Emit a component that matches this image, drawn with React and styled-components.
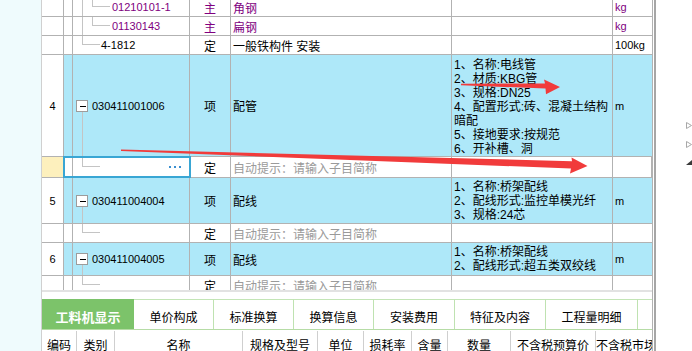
import styled, { createGlobalStyle } from "styled-components";

const GlobalStyle = createGlobalStyle`
  html, body { margin: 0; padding: 0; background: #fff; }
  body {
    font-family: "Liberation Sans", "Noto Sans CJK SC", sans-serif;
    font-size: 12px;
    color: #000;
  }
  * { box-sizing: border-box; }
`;

const COLS = "22px 9px 117px 41px 221px 161px 39px";
const LINE = "#b2b2b2";
const CYAN = "#aee8f9";
const PURPLE = "#800080";

//#region data
const rows = [
  { h: 19, kind: "leaf2", code: "01210101-1", type: "主", name: "角钢", unit: "kg", purple: true },
  { h: 19, kind: "leaf2", code: "01130143", type: "主", name: "扁钢", unit: "kg", purple: true },
  { h: 19, kind: "leaf1", code: "4-1812", type: "定", name: "一般铁构件 安装", unit: "100kg" },
  {
    h: 102, kind: "item", no: "4", code: "030411001006", type: "项", name: "配管", unit: "m", top: true,
    desc: ["1、名称:电线管", "2、材质:KBG管", "3、规格:DN25", "4、配置形式:砖、混凝土结构", "暗配", "5、接地要求:按规范", "6、开补槽、洞"],
  },
  { h: 21, kind: "edit", type: "定", hint: true },
  {
    h: 46, kind: "item", no: "5", code: "030411004004", type: "项", name: "配线", unit: "m",
    desc: ["1、名称:桥架配线", "2、配线形式:监控单模光纤", "3、规格:24芯"],
  },
  { h: 19, kind: "leaf1", type: "定", hint: true },
  {
    h: 33, kind: "item", no: "6", code: "030411004005", type: "项", name: "配线", unit: "m",
    desc: ["1、名称:桥架配线", "2、配线形式:超五类双绞线"],
  },
  { h: 19, kind: "leaf1", type: "定", hint: true },
];

const tabs = [
  { label: "工料机显示", w: 92, active: true },
  { label: "单价构成", w: 80 },
  { label: "标准换算", w: 80 },
  { label: "换算信息", w: 80 },
  { label: "安装费用", w: 81 },
  { label: "特征及内容", w: 91 },
  { label: "工程量明细", w: 92 },
];

const heads = [
  ["编码", 35], ["类别", 38], ["名称", 128], ["规格及型号", 75], ["单位", 46],
  ["损耗率", 48], ["含量", 36], ["数量", 63], ["不含税预算价", 85], ["不含税市场价", 56],
];
//#endregion

function Tree({ kind, h }) {
  const ch = h - 1;
  const mid = Math.round(ch / 2) - 1;
  return (
    <TreeSvg width="117" height={ch}>
      {kind === "leaf2" && (
        <>
          <line x1="9.5" y1="0" x2="9.5" y2={ch} />
          <path d={`M19.5 0V${mid + 0.5}H37`} />
        </>
      )}
      {(kind === "leaf1" || kind === "edit") && <path d={`M9.5 0V${mid + 0.5}H27`} />}
      {kind === "item" && <line x1="9.5" y1={ch / 2 + 6} x2="9.5" y2={ch} />}
    </TreeSvg>
  );
}

function GridRow({ r }) {
  const item = r.kind === "item";
  const color = r.purple ? PURPLE : "#000";
  return (
    <Row $h={r.h} $item={item}>
      <NumCell $edit={r.kind === "edit"}>{r.no}</NumCell>
      <Cell />
      <CodeCell $pad={item ? 3 : r.kind === "leaf2" ? 39 : 28} $color={color}>
        <Tree kind={r.kind} h={r.h} />
        {item && <MinusBox />}
        {r.code && <span>{r.code}</span>}
        {r.kind === "edit" && (
          <Dots width="12" height="2">
            <rect x="0" y="0" width="2" height="2" />
            <rect x="5" y="0" width="2" height="2" />
            <rect x="10" y="0" width="2" height="2" />
          </Dots>
        )}
      </CodeCell>
      <TypeCell $color={color}>{r.type}</TypeCell>
      <NameCell $color={r.hint ? "#9a9a9a" : color}>
        {r.hint ? "自动提示：请输入子目简称" : r.name}
      </NameCell>
      <DescCell $top={r.top}>
        {r.desc && r.desc.map((d) => <div key={d}>{d}</div>)}
      </DescCell>
      <UnitCell $color={color}>{r.unit}</UnitCell>
      {r.kind === "edit" && <Selection />}
    </Row>
  );
}

export default function App() {
  return (
    <Page>
      <GlobalStyle />
      <LeftStrip />
      <Main>
        <GridArea>
          <Body>
            {rows.map((r, i) => (
              <GridRow key={i} r={r} />
            ))}
          </Body>
        </GridArea>
        <Splitter />
        <TabBar>
          {tabs.map((t) => (
            <Tab key={t.label} $w={t.w} $active={t.active}>
              {t.label}
            </Tab>
          ))}
          <TabFill />
        </TabBar>
        <HeadRow>
          {heads.map(([label, w]) => (
            <HeadCell key={label} $w={w}>
              {label}
            </HeadCell>
          ))}
        </HeadRow>
      </Main>
      <Gap />
      <Divider />
      <RightPanel>
        <Tri width="6" height="7">
          <path d="M0.5 0.5L5.5 3.5L0.5 6.5Z" fill="#fff" stroke="#a8a8a8" />
        </Tri>
        <Tri width="6" height="7">
          <path d="M0.5 0.5L5.5 3.5L0.5 6.5Z" fill="#fff" stroke="#a8a8a8" />
        </Tri>
        <Tri width="6" height="5">
          <path d="M6 0L6 5L0 5Z" fill="#3a3a3a" />
        </Tri>
      </RightPanel>
      <Arrows width="692" height="351">
        <path d="M461 83.8L545 83.4L544 79.6L560 87L546 94.2L545.5 88.6L461 85.2Z" />
        <path d="M121 149.6L572 161.2L571.5 157.5L587.5 166L570 173.5L571 168.5L121 151Z" />
      </Arrows>
    </Page>
  );
}

//#region STYLED COMPONENTS
const Page = styled.div`
  position: relative;
  display: flex;
  width: 692px;
  height: 351px;
  overflow: hidden;
  background: #fff;
`;

const LeftStrip = styled.div`
  width: 42px;
  flex-shrink: 0;
  background: #effbfd;
  border-right: 1px solid #d0d0d0;
`;

const Main = styled.div`
  width: 611px;
  flex-shrink: 0;
  display: flex;
  flex-direction: column;
  border-right: 1px solid ${LINE};
`;

const GridArea = styled.div`
  height: 290px;
  flex-shrink: 0;
  overflow: hidden;
`;

const Body = styled.div`
  margin-top: -2px;
`;

const Row = styled.div`
  position: relative;
  display: grid;
  grid-template-columns: ${COLS};
  height: ${(p) => p.$h}px;
  border-bottom: 1px solid ${LINE};
  background: ${(p) => (p.$item ? CYAN : "#fff")};
`;

const Cell = styled.div`
  position: relative;
  display: flex;
  align-items: center;
  overflow: hidden;
  white-space: nowrap;
  border-right: 1px solid ${LINE};
  color: ${(p) => p.$color || "#000"};
  &:last-child {
    border-right: none;
  }
`;

const NumCell = styled(Cell)`
  justify-content: center;
  font-size: 11px;
  background: ${(p) => (p.$edit ? "#fdf0bd" : "#fff")};
`;

const CodeCell = styled(Cell)`
  padding-left: ${(p) => p.$pad}px;
  font-size: 11px;
`;

const TreeSvg = styled.svg`
  position: absolute;
  left: 0;
  top: 0;
  stroke: #c4c4c4;
  stroke-width: 1;
  fill: none;
  shape-rendering: crispEdges;
`;

const MinusBox = styled.span`
  position: relative;
  width: 12px;
  height: 12px;
  margin-right: 4px;
  flex-shrink: 0;
  border: 1px solid #9c9c9c;
  background: #fff;
  &::after {
    content: "";
    position: absolute;
    left: 3px;
    top: 5px;
    width: 6px;
    height: 1px;
    background: #000;
  }
`;

const Dots = styled.svg`
  position: absolute;
  left: 96px;
  top: 9px;
  fill: #3a8fd0;
`;

const Selection = styled.div`
  position: absolute;
  left: 21px;
  top: -1px;
  width: 128px;
  height: 22px;
  border: 2px solid #39a6d4;
  pointer-events: none;
`;

const TypeCell = styled(Cell)`
  justify-content: center;
`;

const NameCell = styled(Cell)`
  padding-left: 2px;
`;

const DescCell = styled(Cell)`
  flex-direction: column;
  align-items: flex-start;
  justify-content: ${(p) => (p.$top ? "flex-start" : "center")};
  padding: ${(p) => (p.$top ? "3px 0 0 2px" : "0 0 0 2px")};
  line-height: 14px;
`;

const UnitCell = styled(Cell)`
  padding-left: 2px;
  font-size: 11px;
`;

const Splitter = styled.div`
  height: 9px;
  flex-shrink: 0;
  border-top: 2px solid #e2e2e2;
`;

const TabBar = styled.div`
  display: flex;
  height: 31px;
  flex-shrink: 0;
  border-bottom: 1px solid #b6dca6;
`;

const Tab = styled.div`
  width: ${(p) => p.$w}px;
  flex-shrink: 0;
  display: flex;
  align-items: center;
  justify-content: center;
  padding-top: 3px;
  border-top: 1px solid ${(p) => (p.$active ? "#7cc36a" : "#c3e5b6")};
  border-right: ${(p) => (p.$active ? "none" : "1px solid #bfe2b1")};
  background: ${(p) => (p.$active ? "#7cc36a" : "#fff")};
  color: ${(p) => (p.$active ? "#fff" : "#000")};
  font-family: "Noto Sans CJK SC", sans-serif;
  font-size: ${(p) => (p.$active ? 13 : 12)}px;
  font-weight: ${(p) => (p.$active ? 700 : 400)};
`;

const TabFill = styled.div`
  flex: 1;
  border-top: 1px solid #c3e5b6;
`;

const HeadRow = styled.div`
  display: flex;
  height: 28px;
  margin-top: 1px;
  flex-shrink: 0;
`;

const HeadCell = styled.div`
  width: ${(p) => p.$w}px;
  flex-shrink: 0;
  overflow: hidden;
  white-space: nowrap;
  text-align: center;
  line-height: 28px;
  border-right: 1px solid #cfcfcf;
  font-family: "Noto Sans CJK SC", sans-serif;
  &:last-child {
    border-right: none;
  }
`;

const Gap = styled.div`
  width: 1px;
  flex-shrink: 0;
`;

const Divider = styled.div`
  width: 2px;
  flex-shrink: 0;
  background: #a6a6a6;
`;

const RightPanel = styled.div`
  flex: 1;
  display: flex;
  flex-direction: column;
  gap: 12px;
  padding: 122px 0 0 30px;
  background: #fff;
`;

const Tri = styled.svg`
  display: block;
  flex-shrink: 0;
`;

const Arrows = styled.svg`
  position: absolute;
  left: 0;
  top: 0;
  pointer-events: none;
  fill: #f13b3b;
`;
//#endregion
